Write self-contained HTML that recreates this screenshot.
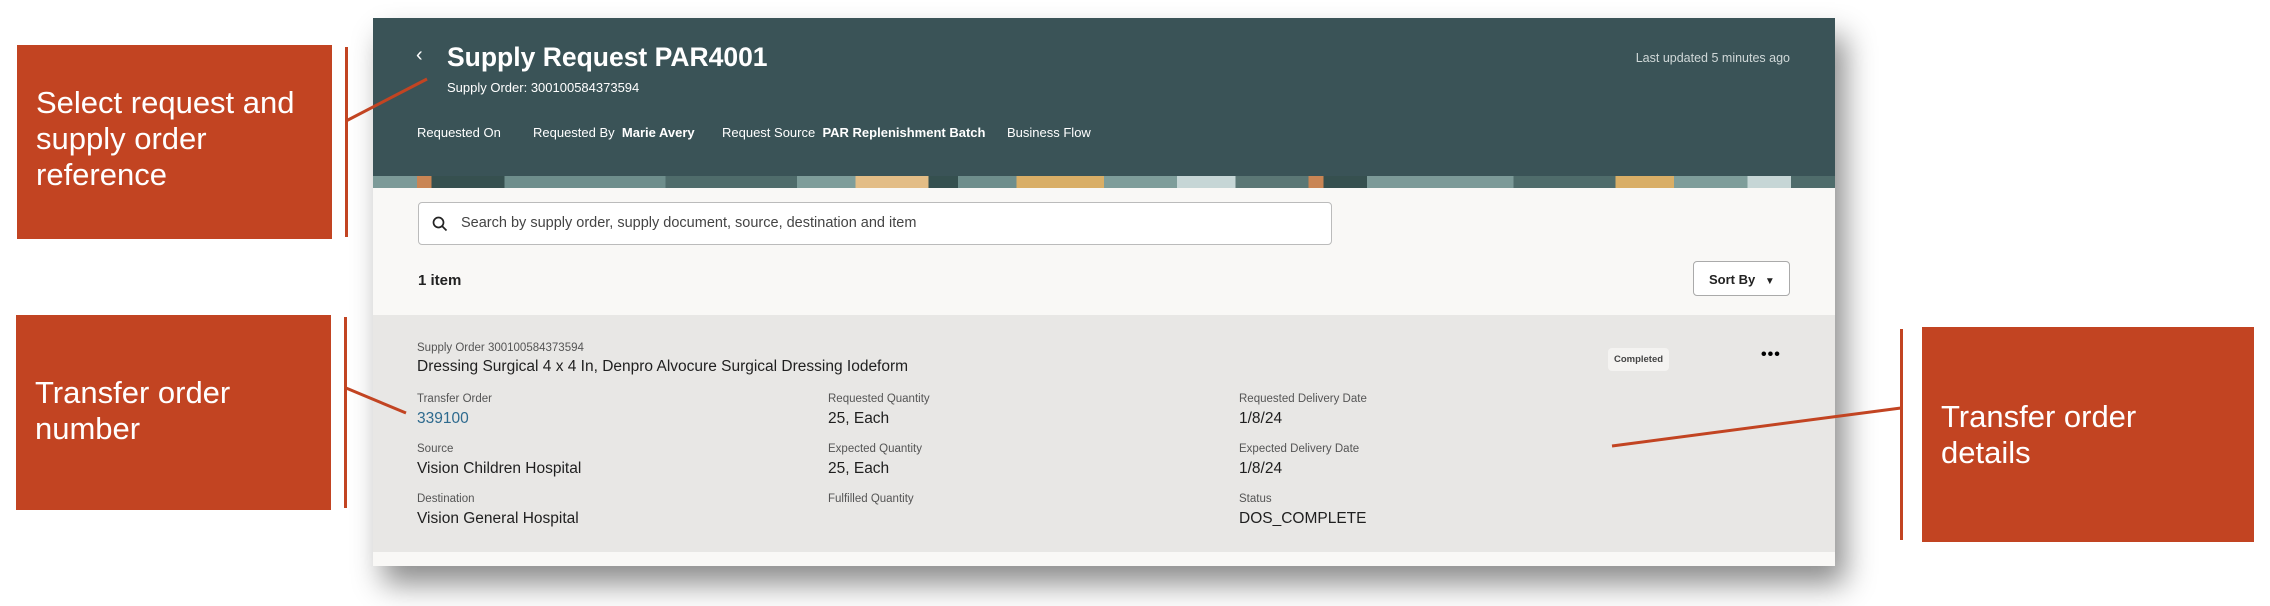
<!DOCTYPE html>
<html><head><meta charset="utf-8"><style>
*{margin:0;padding:0;box-sizing:border-box}
body{width:2270px;height:606px;background:#fff;position:relative;overflow:hidden;font-family:"Liberation Sans",sans-serif}
.ab{position:absolute;white-space:nowrap}
.box{position:absolute;background:#c24422;color:#fff;font-size:31px;line-height:36px;padding-left:19px}
.vl{position:absolute;width:3px;background:#c24422}
.panel{position:absolute;left:373px;top:18px;width:1462px;height:548px;background:#f9f8f6;box-shadow:10px 18px 28px rgba(0,0,0,.45);overflow:hidden}
.hdr{position:absolute;left:0;top:0;width:100%;height:158px;background:#3a5357;color:#fff}
.band{position:absolute;left:0;top:158px;width:100%;height:12px;background:linear-gradient(90deg,#7c9a98 0 3%,#c98554 3% 4%,#36504f 4% 9%,#6e8e8c 9% 20%,#4f6c6b 20% 29%,#7e9d9a 29% 33%,#e3bd86 33% 38%,#35504f 38% 40%,#6e8e8c 40% 44%,#d9ae66 44% 50%,#7e9d9a 50% 55%,#c6d6d6 55% 59%,#5b7775 59% 64%,#c98554 64% 65%,#36504f 65% 68%,#7c9a98 68% 78%,#4f6c6b 78% 85%,#d9ae66 85% 89%,#7e9d9a 89% 94%,#c6d6d6 94% 97%,#4f6c6b 97%)}
.lbl{font-size:11.5px;color:#555}
.val{font-size:15.5px;color:#1f1f1f}
</style></head><body>
<div class="box" style="left:17px;top:45px;width:315px;height:194px;padding-top:40px">Select request and<br>supply order<br>reference</div>
<div class="vl" style="left:345px;top:47px;height:190px"></div>
<div class="box" style="left:16px;top:315px;width:315px;height:195px;padding-top:60px">Transfer order<br>number</div>
<div class="vl" style="left:344px;top:317px;height:191px"></div>
<div class="box" style="left:1922px;top:327px;width:332px;height:215px;padding-top:72px">Transfer order<br>details</div>
<div class="vl" style="left:1900px;top:329px;height:211px"></div>

<div class="panel">
 <div class="hdr">
  <div class="ab" style="left:43px;top:26px;font-size:20px">&#8249;</div>
  <div class="ab" style="left:74px;top:24px;font-size:26.5px;font-weight:bold">Supply Request PAR4001</div>
  <div class="ab" style="left:74px;top:62px;font-size:13px">Supply Order: 300100584373594</div>
  <div class="ab" style="left:44px;top:107px;font-size:13px">Requested On</div>
  <div class="ab" style="left:160px;top:107px;font-size:13px">Requested By&nbsp; <b>Marie Avery</b></div>
  <div class="ab" style="left:349px;top:107px;font-size:13px">Request Source&nbsp; <b>PAR Replenishment Batch</b></div>
  <div class="ab" style="left:634px;top:107px;font-size:13px">Business Flow</div>
  <div class="ab" style="right:45px;top:33px;font-size:12.5px;color:#d0d8d8">Last updated 5 minutes ago</div>
 </div>
 <div class="band"></div>
 <div class="ab" style="left:45px;top:184px;width:914px;height:43px;background:#fff;border:1px solid #bbb;border-radius:4px">
  <svg class="ab" style="left:13px;top:13px" width="16" height="16" viewBox="0 0 16 16"><circle cx="6.5" cy="6.5" r="5" fill="none" stroke="#222" stroke-width="1.7"/><path d="M10 10l4.5 4.5" stroke="#222" stroke-width="1.7"/></svg>
  <div class="ab" style="left:42px;top:12px;font-size:14.5px;color:#444">Search by supply order, supply document, source, destination and item</div>
 </div>
 <div class="ab" style="left:45px;top:254px;font-size:15px;font-weight:bold;color:#222">1 item</div>
 <div class="ab" style="left:1320px;top:243px;width:97px;height:35px;background:#fff;border:1px solid #aaa;border-radius:4px;font-size:13px;font-weight:bold;padding:10px 0 0 15px;color:#222">Sort By <span style="font-size:10px;margin-left:6px">&#9660;</span></div>
 <div class="ab" style="left:0;top:297px;width:100%;height:237px;background:#e8e7e5">
  <div class="ab lbl" style="left:44px;top:27px">Supply Order 300100584373594</div>
  <div class="ab val" style="left:44px;top:43px">Dressing Surgical 4 x 4 In, Denpro Alvocure Surgical Dressing Iodeform</div>
  <div class="ab" style="left:1235px;top:33px;width:61px;height:23px;background:#f4f3f1;border-radius:4px;font-size:9.5px;font-weight:bold;color:#444;text-align:center;line-height:23px">Completed</div>
  <div class="ab" style="left:1388px;top:31px;font-size:16px;font-weight:bold;letter-spacing:1px">&#8226;&#8226;&#8226;</div>

  <div class="ab lbl" style="left:44px;top:78px">Transfer Order</div>
  <div class="ab val" style="left:44px;top:95px;color:#2d6a8e">339100</div>
  <div class="ab lbl" style="left:44px;top:128px">Source</div>
  <div class="ab val" style="left:44px;top:145px">Vision Children Hospital</div>
  <div class="ab lbl" style="left:44px;top:178px">Destination</div>
  <div class="ab val" style="left:44px;top:195px">Vision General Hospital</div>

  <div class="ab lbl" style="left:455px;top:78px">Requested Quantity</div>
  <div class="ab val" style="left:455px;top:95px">25, Each</div>
  <div class="ab lbl" style="left:455px;top:128px">Expected Quantity</div>
  <div class="ab val" style="left:455px;top:145px">25, Each</div>
  <div class="ab lbl" style="left:455px;top:178px">Fulfilled Quantity</div>

  <div class="ab lbl" style="left:866px;top:78px">Requested Delivery Date</div>
  <div class="ab val" style="left:866px;top:95px">1/8/24</div>
  <div class="ab lbl" style="left:866px;top:128px">Expected Delivery Date</div>
  <div class="ab val" style="left:866px;top:145px">1/8/24</div>
  <div class="ab lbl" style="left:866px;top:178px">Status</div>
  <div class="ab val" style="left:866px;top:195px">DOS_COMPLETE</div>
 </div>
</div>
<svg class="ab" style="left:0;top:0" width="2270" height="606">
 <line x1="346" y1="121" x2="427" y2="79" stroke="#c24422" stroke-width="3"/>
 <line x1="346" y1="388" x2="406" y2="413" stroke="#c24422" stroke-width="3"/>
 <line x1="1901" y1="408" x2="1612" y2="446" stroke="#c24422" stroke-width="3"/>
</svg>
</body></html>
